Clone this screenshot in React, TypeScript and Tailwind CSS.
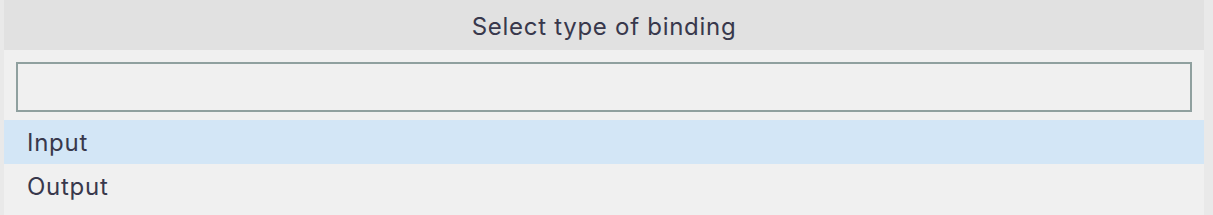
export default function App() {
  const items = ['Input', 'Output'];
  return (
    <div className="flex h-[215px] w-[1213px] bg-[#e9e9e9] font-['Inter',sans-serif] text-[#38384c]">
      <div className="ml-[4px] flex w-[1200px] flex-col bg-[#f0f0f0] pb-[5px]">
        <div className="flex h-[50px] items-center justify-center bg-[#e1e1e1] pt-[3px] text-[24px] tracking-[0.03em]">
          Select type of binding
        </div>
        <div className="px-[12px] pt-[12px] pb-[8px]">
          <div className="h-[50px] border-2 border-[#8fa09f]" />
        </div>
        {items.map((item, i) => (
          <div
            key={item}
            className={`flex h-[44px] items-center pt-[2px] pl-[23px] text-[24px] tracking-[0.03em] ${i === 0 ? 'bg-[#d3e6f6]' : ''}`}
          >
            {item}
          </div>
        ))}
      </div>
    </div>
  );
}
